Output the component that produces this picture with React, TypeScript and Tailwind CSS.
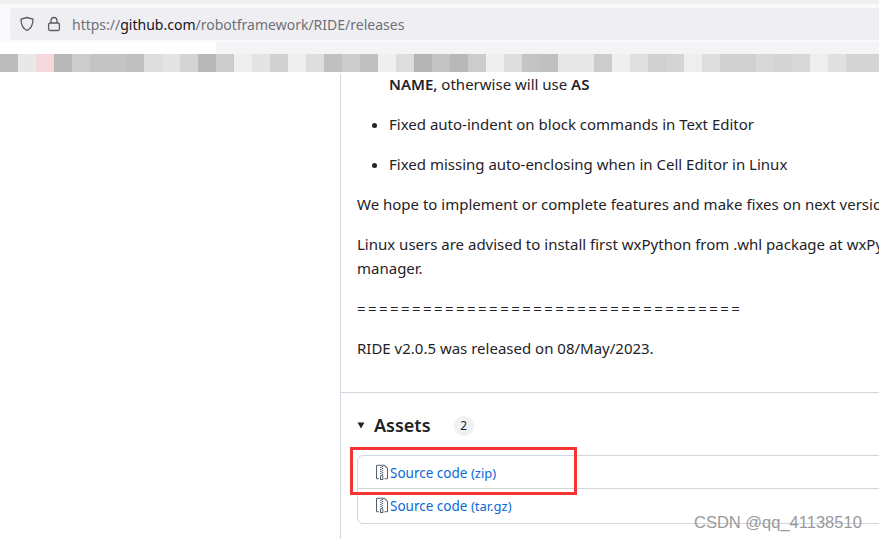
import { GoFileZip } from 'react-icons/go';

// mosaic cells over the tab strip, 18px wide each
const BLUR_CELLS = [
  'bg-[#bcbcbc]', 'bg-[#e8e8e8]', 'bg-[#f5d8dc]', 'bg-[#b8b8b8]', 'bg-[#cccccc]', 'bg-[#c4c4c4]', 'bg-[#c4c4c4]', 'bg-[#c0c0c0]',
  'bg-[#dddddd]', 'bg-[#e4e4e4]', 'bg-[#d4d4d4]', 'bg-[#b8b8b8]', 'bg-[#cccccc]', 'bg-[#eeeeee]', 'bg-[#e4e4e4]', 'bg-[#d0d0d0]',
  'bg-[#eeeeee]', 'bg-[#dddddd]', 'bg-[#c0c0c0]', 'bg-[#cccccc]', 'bg-[#c0c0c0]', 'bg-[#efefef]', 'bg-[#dddddd]', 'bg-[#b4b4b4]',
  'bg-[#c4c4c4]', 'bg-[#b8b8b8]', 'bg-[#cccccc]', 'bg-[#efefef]', 'bg-[#dddddd]', 'bg-[#c4c4c4]', 'bg-[#c0c0c0]', 'bg-[#e8e8e8]',
  'bg-[#e8e8e8]', 'bg-[#cccccc]', 'bg-[#efefef]', 'bg-[#e0e0e0]', 'bg-[#d0d0d0]', 'bg-[#d4d4d4]', 'bg-[#eeeeee]', 'bg-[#dddddd]',
  'bg-[#d0d0d0]', 'bg-[#d0d0d0]', 'bg-[#d8d8d8]', 'bg-[#d4d4d4]', 'bg-[#d8d8d8]', 'bg-[#eeeeee]', 'bg-[#e0e0e0]', 'bg-[#d4d4d4]',
  'bg-[#d4d4d4]',
];

function AssetRow({ ext, last }: { ext: string; last?: boolean }) {
  return (
    <div className={`flex items-center pl-[16px] ${last ? 'h-[34px]' : 'h-[33px] pt-[2px] border-b border-[#d0d7de]'}`}>
      <GoFileZip size={16} className="text-[#57606a] shrink-0 -mt-[3px]" />
      <span className="text-[#0969da] text-[13.500px] leading-none mt-[2px]">
        Source code <span className="text-[13px]">({ext})</span>
      </span>
    </div>
  );
}

export default function App() {
  return (
    <div className="relative w-[879px] h-[539px] overflow-hidden bg-white font-['Noto_Sans',sans-serif] text-[#1f2328]">
      {/* Browser toolbar */}
      <div className="h-[42px] bg-[#f9f9fb] border-t-4 border-[#f0f0f0] pt-1">
        <div className="h-[32px] ml-[10px] bg-[#efeff3] rounded-l flex items-center pl-[9px]">
          <svg width="16" height="16" viewBox="0 0 16 16" fill="none" stroke="#5b5b66" strokeWidth="1.3" className="shrink-0">
            <path d="M8 1.500 14 3.200c0 5.500-1.800 9.300-6 11.300-4.200-2-6-5.800-6-11.300z" strokeLinejoin="round" />
          </svg>
          <svg width="14" height="16" viewBox="0 0 14 16" fill="none" stroke="#5b5b66" strokeWidth="1.3" className="ml-[12px] shrink-0">
            <path d="M4 7V4.500a3 3 0 0 1 6 0V7" />
            <rect x="1.600" y="7" width="10.800" height="7.500" rx="1.500" />
          </svg>
          <span className="ml-[11px] text-[14px] text-[#6f6f78]">
            https://<span className="text-[#15141a]">github.com</span>/robotframework/RIDE/releases
          </span>
        </div>
      </div>

      {/* Mosaic strip */}
      <div className="h-[12px] ml-[216px] bg-[#f4f4f6]" />
      <div className="h-[18px] flex">
        {BLUR_CELLS.map((c, i) => (
          <div key={i} className={`w-[18px] shrink-0 ${c}`} />
        ))}
      </div>

      {/* Page */}
      <div className="flex h-[467px] mt-[2px]">
        <div className="w-[340px] shrink-0" />
        <div className="w-[700px] shrink-0 border-l border-[#d0d7de] pl-[16px] text-[15px] whitespace-nowrap">
          <p className="pl-[32px] leading-[20px]">
            <b className="font-semibold">NAME,</b> otherwise will use <b className="font-semibold">AS</b>
          </p>
          <ul className="list-disc pl-[32px] mt-[20px] flex flex-col gap-[20px] leading-[20px]">
            <li>Fixed auto-indent on block commands in Text Editor</li>
            <li>Fixed missing auto-enclosing when in Cell Editor in Linux</li>
          </ul>
          <p className="mt-[20px] leading-[20px]">We hope to implement or complete features and make fixes on next version releases.</p>
          <p className="mt-[18px] leading-[24px]">
            Linux users are advised to install first wxPython from .whl package at wxPython.org, or by using the system package
            <br />
            manager.
          </p>
          <p className="mt-[16px] leading-[24px] tracking-[2.430px]">===================================</p>
          <p className="mt-[16px] leading-[24px]">RIDE v2.0.5 was released on 08/May/2023.</p>

          <div className="border-t border-[#d0d7de] -ml-[16px] mt-[32px] pl-[16px]">
            <div className="flex items-center h-[24px] mt-[20px]">
              <svg width="8" height="8" viewBox="0 0 8 8" className="fill-[#1f2328] shrink-0">
                <path d="M0.500 1.500h7L4 7.500z" />
              </svg>
              <span className="ml-[9px] text-[18px] font-semibold">Assets</span>
              <span className="ml-[23px] mt-[2px] w-[20px] h-[20px] rounded-full bg-[#eff1f3] text-[12px] flex items-center justify-center">2</span>
            </div>
            <div className="mt-[18px] border border-[#d0d7de] rounded-md">
              <AssetRow ext="zip" />
              <AssetRow ext="tar.gz" last />
            </div>
          </div>
        </div>
      </div>

      {/* Red annotation and watermark over the page */}
      <div className="absolute left-[350px] top-[447px] w-[227px] h-[48px] border-[3px] border-[#f33535]" />
      <span className="absolute left-[694px] top-[512px] text-[16.500px] leading-[20px] text-[#999999] font-['Liberation_Sans',sans-serif]">
        CSDN @qq_41138510
      </span>
    </div>
  );
}
